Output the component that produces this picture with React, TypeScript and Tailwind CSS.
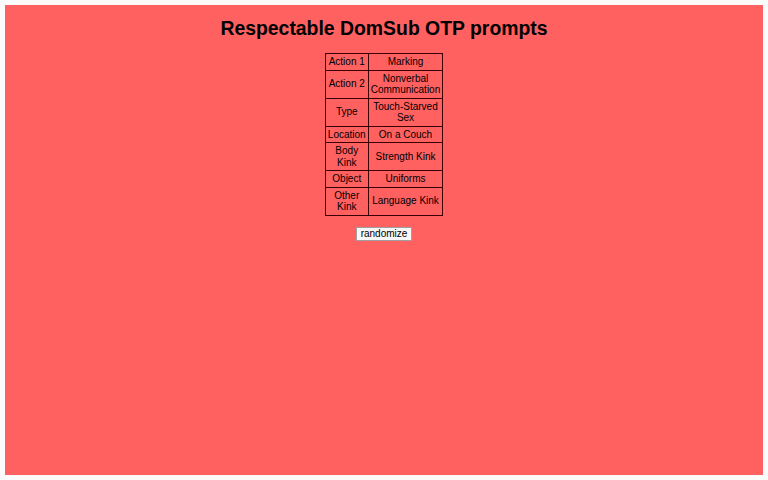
const rows: [string, string][] = [
  ["Action 1", "Marking"],
  ["Action 2", "Nonverbal Communication"],
  ["Type", "Touch-Starved Sex"],
  ["Location", "On a Couch"],
  ["Body Kink", "Strength Kink"],
  ["Object", "Uniforms"],
  ["Other Kink", "Language Kink"],
];

export default function App() {
  return (
    <div className="h-[480px] w-[768px] bg-[#fbfbfb] p-[5px] font-['Liberation_Sans',Arial,sans-serif] text-black">
      <div className="flex h-[470px] flex-col items-center bg-[#ff6161] pt-[12px]">
        <h1 className="text-[19.4px] font-bold leading-[23px]">Respectable DomSub OTP prompts</h1>
        <table className="mt-[13px] border-collapse border border-[#3a0000] text-[10px] leading-[11.5px]">
          <tbody>
            {rows.map(([label, value]) => (
              <tr key={label}>
                <td className="w-[43px] border border-[#3a0000] px-[2px] py-[2px] text-center">{label}</td>
                <td className="w-[74px] border border-[#3a0000] px-[2px] py-[2px] text-center">{value}</td>
              </tr>
            ))}
          </tbody>
        </table>
        <button className="mt-[11px] h-[14px] border border-[#a0a0a0] bg-[#f7f7f7] px-[4px] text-[10px] leading-[12px]">
          randomize
        </button>
      </div>
    </div>
  );
}
